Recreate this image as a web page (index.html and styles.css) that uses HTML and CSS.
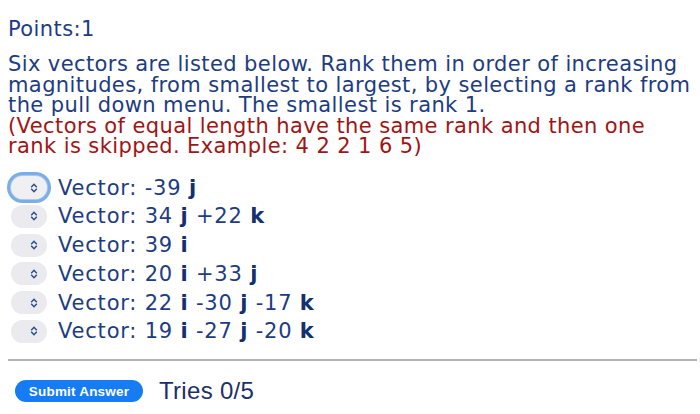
FILE: index.html
```html
<!DOCTYPE html>
<html>
<head>
<meta charset="utf-8">
<link rel="stylesheet" href="styles.css">
</head>
<body>
<div class="page">
  <div class="points">Points:1</div>
  <div class="question">
    <div class="blue">Six vectors are listed below. Rank them in order of increasing<br>magnitudes, from smallest to largest, by selecting a rank from<br>the pull down menu. The smallest is rank 1.</div>
    <div class="red">(Vectors of equal length have the same rank and then one<br>rank is skipped. Example: 4 2 2 1 6 5)</div>
  </div>
  <div class="rows">
    <div class="row"><span class="sel focus"><svg viewBox="0 0 8 10" class="chev"><path d="M1.2 4.3 L4 1.3 L6.8 4.3 M1.2 5.7 L4 8.7 L6.8 5.7" fill="none" stroke="#2a4a8a" stroke-width="1.4"/></svg></span><span class="vec">Vector: -39 <b>j</b></span></div>
    <div class="row"><span class="sel"><svg viewBox="0 0 8 10" class="chev"><path d="M1.2 4.3 L4 1.3 L6.8 4.3 M1.2 5.7 L4 8.7 L6.8 5.7" fill="none" stroke="#2a4a8a" stroke-width="1.4"/></svg></span><span class="vec">Vector: 34 <b>j</b> +22 <b>k</b></span></div>
    <div class="row"><span class="sel"><svg viewBox="0 0 8 10" class="chev"><path d="M1.2 4.3 L4 1.3 L6.8 4.3 M1.2 5.7 L4 8.7 L6.8 5.7" fill="none" stroke="#2a4a8a" stroke-width="1.4"/></svg></span><span class="vec">Vector: 39 <b>i</b></span></div>
    <div class="row"><span class="sel"><svg viewBox="0 0 8 10" class="chev"><path d="M1.2 4.3 L4 1.3 L6.8 4.3 M1.2 5.7 L4 8.7 L6.8 5.7" fill="none" stroke="#2a4a8a" stroke-width="1.4"/></svg></span><span class="vec">Vector: 20 <b>i</b> +33 <b>j</b></span></div>
    <div class="row"><span class="sel"><svg viewBox="0 0 8 10" class="chev"><path d="M1.2 4.3 L4 1.3 L6.8 4.3 M1.2 5.7 L4 8.7 L6.8 5.7" fill="none" stroke="#2a4a8a" stroke-width="1.4"/></svg></span><span class="vec">Vector: 22 <b>i</b> -30 <b>j</b> -17 <b>k</b></span></div>
    <div class="row"><span class="sel"><svg viewBox="0 0 8 10" class="chev"><path d="M1.2 4.3 L4 1.3 L6.8 4.3 M1.2 5.7 L4 8.7 L6.8 5.7" fill="none" stroke="#2a4a8a" stroke-width="1.4"/></svg></span><span class="vec">Vector: 19 <b>i</b> -27 <b>j</b> -20 <b>k</b></span></div>
  </div>
  <div class="rule"></div>
  <div class="footer">
    <button class="submit">Submit Answer</button>
    <span class="tries">Tries 0/5</span>
  </div>
</div>
</body>
</html>
```
FILE: styles.css
```css
html, body {
  margin: 0;
  padding: 0;
  background: #ffffff;
}
.page {
  padding: 17px 3px 0 8px;
  font-family: "DejaVu Sans", Verdana, sans-serif;
  color: #1d3c82;
}
.points {
  font-size: 21px;
  line-height: 24px;
  letter-spacing: 0.4px;
}
.question {
  margin-top: 13px;
  font-size: 21px;
  line-height: 20.5px;
  letter-spacing: 0.4px;
  white-space: nowrap;
}
.red {
  color: #a01414;
}
.rows {
  margin-top: 20px;
  display: flex;
  flex-direction: column;
  gap: 6.8px;
}
.row {
  display: flex;
  align-items: center;
  height: 22px;
}
.sel {
  width: 36px;
  height: 23px;
  margin-left: 3px;
  margin-right: 11px;
  border-radius: 11.5px;
  background: #ebebef;
  display: flex;
  align-items: center;
  justify-content: flex-end;
  padding-right: 9px;
  box-sizing: border-box;
}
.sel.focus {
  box-shadow: 0 0 0 1px #a9c9ef, 0 0 0 4px #7aaee6;
  background: #f0f0f3;
}
.chev {
  width: 8px;
  height: 10px;
}
.vec {
  font-size: 21px;
  line-height: 22px;
  letter-spacing: 0.8px;
}
.vec b {
  color: #14306f;
}
.rule {
  margin-top: 17px;
  height: 2px;
  background: #b3b3b3;
}
.footer {
  margin-top: 19px;
  display: flex;
  align-items: center;
  gap: 16px;
}
.submit {
  margin-left: 7px;
  width: 128px;
  height: 22px;
  border: none;
  border-radius: 11px;
  background: #157cf3;
  color: #ffffff;
  font-family: "Liberation Sans", Arial, sans-serif;
  font-weight: bold;
  font-size: 13.5px;
  letter-spacing: 0.2px;
  padding: 0;
}
.tries {
  font-family: "Liberation Sans", Arial, sans-serif;
  font-size: 24px;
  line-height: 22px;
  letter-spacing: 0.3px;
  color: #1c2f6a;
}
```
